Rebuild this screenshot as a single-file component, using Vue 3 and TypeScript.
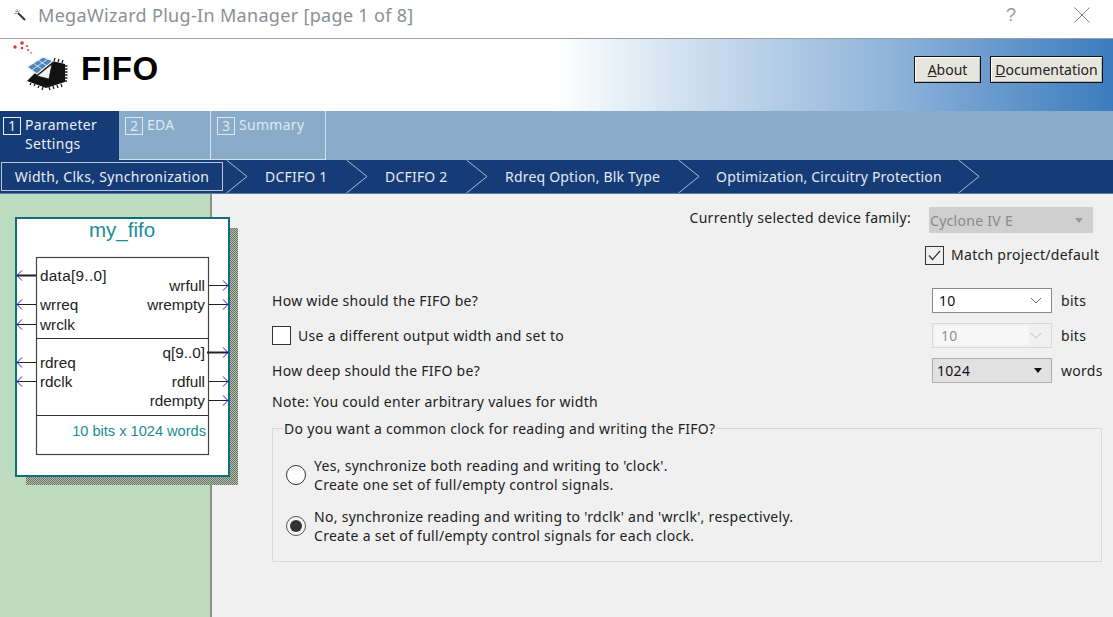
<script setup lang="ts">
interface Step { label: string; active?: boolean }
const steps: Step[] = [
  { label: 'Width, Clks, Synchronization', active: true },
  { label: 'DCFIFO 1' },
  { label: 'DCFIFO 2' },
  { label: 'Rdreq Option, Blk Type' },
  { label: 'Optimization, Circuitry Protection' },
]
const tabs = [
  { n: 1, lines: ['Parameter', 'Settings'], active: true, w: 119 },
  { n: 2, lines: ['EDA'], active: false, w: 92 },
  { n: 3, lines: ['Summary'], active: false, w: 115 },
]
const leftPins = [
  { y: 58, name: 'data[9..0]', bus: true },
  { y: 87, name: 'wrreq' },
  { y: 107, name: 'wrclk' },
  { y: 145, name: 'rdreq' },
  { y: 164, name: 'rdclk' },
]
const rightPins = [
  { y: 68, name: 'wrfull' },
  { y: 87, name: 'wrempty' },
  { y: 135, name: 'q[9..0]', bus: true },
  { y: 164, name: 'rdfull' },
  { y: 183, name: 'rdempty' },
]
</script>

<template>
  <div class="win">
    <div class="titlebar">
      <svg class="wand" width="14" height="14" viewBox="0 0 14 14">
        <path d="M5 5 L12 12" stroke="#333" stroke-width="2" />
        <path d="M2 3 L5 4 M4 1 L4.500 3.500 M7 2 L5 4 M1 6 L4 5" stroke="#999" stroke-width="1" />
      </svg>
      <span class="title">MegaWizard Plug-In Manager [page 1 of 8]</span>
      <span class="help">?</span>
      <svg class="close" width="16" height="16" viewBox="0 0 16 16">
        <path d="M0.500 0.500 L15.500 15.500 M15.500 0.500 L0.500 15.500" stroke="#808080" stroke-width="1" fill="none" />
      </svg>
    </div>

    <header class="banner">
      <svg class="logo" width="60" height="58" viewBox="0 0 60 58">
        <g fill="#d9342c">
          <circle cx="3" cy="7" r="1.700" /><circle cx="10" cy="3" r="1.800" /><circle cx="10" cy="8" r="1.300" />
          <circle cx="15" cy="6" r="1" /><circle cx="16" cy="10" r="1" /><circle cx="19" cy="13" r="0.800" />
        </g>
        <path d="M36 20 L53 24 L53 42 L34 48 L15 41 L22 34 Z" fill="#111" />
        <path d="M53 26 h2.500 M53 29 h2.500 M53 32 h2.500 M53 35 h2.500 M53 38 h2.500 M53 41 h2 M49 44 l1 3 M45 45 l1 3 M41 46 l1 3 M37 47 l1 3 M31 47 l-1 3 M27 46 l-1 2 M23 44 l-1 2 M19 43 l-1 2 M42 21 l1 -3 M46 22 l1 -3 M50 23 l1 -3" stroke="#1c1c1c" stroke-width="1.300" />
        <path d="M15 27 L31 17 L41 21 L25 34 Z" fill="#4f86b8" stroke="#eef3f8" stroke-width="1.200" />
        <path d="M20 30 L36 19 M21 23 L31 30 M26 20 L35 26" stroke="#dfe9f3" stroke-width="0.900" />
        <path d="M25 36 L40 24 L37 39 Z" fill="#f2f2f2" stroke="#111" stroke-width="0.800" />
      </svg>
      <span class="fifo">FIFO</span>
      <div class="banner-btns">
        <button class="btn about"><u>A</u>bout</button>
        <button class="btn doc"><u>D</u>ocumentation</button>
      </div>
    </header>

    <nav class="tabs">
      <div v-for="t in tabs" :key="t.n" class="tab" :class="{ on: t.active }" :style="{ width: t.w + 'px' }">
        <span class="num">{{ t.n }}</span>
        <span class="tab-label"><span v-for="l in t.lines" :key="l" class="tab-line">{{ l }}</span></span>
      </div>
    </nav>

    <nav class="steps">
      <template v-for="(s, i) in steps" :key="s.label">
        <span class="step" :class="[{ on: s.active }, 's' + i]">{{ s.label }}</span>
        <svg class="chev" width="22" height="33" viewBox="0 0 22 33">
          <path d="M0.500 0 L21 16.500 L0.500 33" stroke="#aab9cf" stroke-width="1" fill="none" />
        </svg>
      </template>
    </nav>

    <main class="body">
      <aside class="side">
        <svg class="symbol" width="226" height="270" viewBox="0 0 226 270">
          <defs>
            <pattern id="dots" width="2" height="2" patternUnits="userSpaceOnUse">
              <rect width="2" height="2" fill="#b4bdb0" />
              <rect width="1" height="1" fill="#66755f" />
              <rect x="1" y="1" width="1" height="1" fill="#66755f" />
            </pattern>
          </defs>
          <rect x="11" y="11" width="212" height="257" fill="url(#dots)" />
          <rect x="1" y="1" width="213" height="258" fill="#fff" stroke="#0d7078" stroke-width="2" />
          <text x="107" y="20" class="t-name" text-anchor="middle">my_fifo</text>
          <rect x="21.500" y="40.500" width="172" height="197" fill="#fff" stroke="#444" stroke-width="1.200" />
          <path d="M21 121.500 H194 M21 198.500 H194" stroke="#333" stroke-width="1.200" />
          <g v-for="p in leftPins" :key="p.name">
            <path :d="`M2 ${p.y + 0.5} H21`" stroke="#222" :stroke-width="p.bus ? 2 : 1" />
            <path :d="`M7 ${p.y - 4.5} L2 ${p.y + 0.5} L7 ${p.y + 5.5}`" stroke="#1a1aff" stroke-width="1" fill="none" />
            <text x="25" :y="p.y + 6" class="t-pin" :class="{ wide: p.bus }">{{ p.name }}</text>
          </g>
          <g v-for="p in rightPins" :key="p.name">
            <path :d="`M${p.bus ? 192 : 194} ${p.y + 0.5} H213`" stroke="#222" :stroke-width="p.bus ? 2 : 1" />
            <path :d="`M208 ${p.y - 4.5} L213 ${p.y + 0.5} L208 ${p.y + 5.5}`" stroke="#1a1aff" stroke-width="1" fill="none" />
            <text x="190" :y="p.y + 5.5" class="t-pin" text-anchor="end">{{ p.name }}</text>
          </g>
          <text x="191" y="219" class="t-info" text-anchor="end">10 bits x 1024 words</text>
        </svg>
      </aside>

      <section class="panel">
        <div class="family">
          <span class="lift3">Currently selected device family:</span>
          <div class="fam-select">
            <span>Cyclone IV E</span>
            <i class="tri light"></i>
          </div>
        </div>
        <label class="match">
          <span class="check">
            <svg width="13" height="11" viewBox="0 0 13 11"><path d="M1 5.500 L4.500 9.500 L12 1" stroke="#333" stroke-width="1.200" fill="none" /></svg>
          </span>
          <span class="lift1">Match project/default</span>
        </label>

        <div class="row r-wide">
          <span class="row-label">How wide should the FIFO be?</span>
          <div class="combo"><span>10</span><svg width="12" height="7" viewBox="0 0 12 7"><path d="M1 1 L6 6 L11 1" stroke="#666" fill="none" /></svg></div>
          <span class="unit">bits</span>
        </div>
        <div class="row r-diff">
          <span class="row-label with-check"><span class="check"></span>Use a different output width and set to</span>
          <div class="combo off"><span class="off-field">10</span><svg width="12" height="7" viewBox="0 0 12 7"><path d="M1 1 L6 6 L11 1" stroke="#bbb" fill="none" /></svg></div>
          <span class="unit">bits</span>
        </div>
        <div class="row r-deep">
          <span class="row-label">How deep should the FIFO be?</span>
          <div class="combo drop"><span>1024</span><i class="tri"></i></div>
          <span class="unit">words</span>
        </div>
        <p class="note">Note: You could enter arbitrary values for width</p>

        <fieldset class="group">
          <legend>Do you want a common clock for reading and writing the FIFO?</legend>
          <div class="radio first">
            <span class="dot"></span>
            <span>Yes, synchronize both reading and writing to 'clock'.<br>Create one set of full/empty control signals.</span>
          </div>
          <div class="radio">
            <span class="dot sel"></span>
            <span>No, synchronize reading and writing to 'rdclk' and 'wrclk', respectively.<br>Create a set of full/empty control signals for each clock.</span>
          </div>
        </fieldset>
      </section>
    </main>
  </div>
</template>

<style>
html, body { margin: 0; padding: 0; background: #f0f0f0; }
</style>

<style scoped>
.win {
  width: 1113px; height: 617px; overflow: hidden; display: flex; flex-direction: column;
  font-family: "Noto Sans", "Open Sans", sans-serif; font-size: 14px; letter-spacing: 0.29px; color: #222; background: #f0f0f0;
}
.titlebar {
  flex: none; background: #fff; border-bottom: 1px solid #9a9fa6;
  display: flex; align-items: center; padding: 0 0 8px 13px; box-sizing: border-box; height: 39px;
}
.wand { flex: none; }
.title { margin-left: 11px; font-size: 18px; color: #8b8f94; letter-spacing: 0.32px; }
.help { margin-left: auto; font-size: 18px; color: #9a9a9a; font-family: "Liberation Sans", sans-serif; letter-spacing: 0; }
.close { margin: 0 23px 0 58px; }
.banner {
  height: 72px; flex: none; display: flex; align-items: center; padding-bottom: 12px; box-sizing: border-box;
  background: linear-gradient(90deg, #fff 0, #fff 50%, #d6e4f1 60%, #8fb4da 80%, #3c7cbd 100%);
}
.logo { margin: 0 0 0 12px; flex: none; }
.fifo { font-family: "Liberation Sans", sans-serif; font-weight: 700; font-size: 33px; color: #000; margin-left: 9px; letter-spacing: 0.7px; }
.banner-btns { margin-left: auto; margin-right: 10px; display: flex; gap: 9px; }
.btn {
  height: 27px; padding: 0; border: 1px solid #111; background: #e6e6de; font: inherit; font-size: 14px; letter-spacing: 0;
  color: #222; box-shadow: inset 1px 1px 0 #fff, inset -1px -1px 0 #bbb;
}
.about { width: 67px; }
.doc { width: 113px; }
.tabs { height: 49px; flex: none; display: flex; background: #8aaccb; }
.tab {
  box-sizing: border-box; border-right: 1px solid #d6e2ee; border-bottom: 1px solid #d6e2ee; padding: 4px 0 0 6px;
  display: flex; gap: 4px; color: #dfe8f1; line-height: 19px; font-size: 14px;
}
.tab.on { background: #163c78; color: #e8eef5; border: none; padding: 4px 0 0 3px; }
.num {
  width: 16px; height: 16px; margin-top: 2px; border: 1px solid currentColor; flex: none; text-align: center; line-height: 16px; font-size: 13.500px; box-sizing: content-box; letter-spacing: 0;
}
.tab-line { display: block; }
.steps { height: 33px; flex: none; display: flex; align-items: center; background: #163c78; color: #e3e9f1; font-size: 14px; letter-spacing: 0.2px; border-bottom: 1px solid #5f7fa8; box-sizing: content-box; }
.step { white-space: nowrap; }
.step.on {
  box-sizing: border-box; width: 222px; height: 29px; margin-left: 1px; border: 1px solid #b9c7da; display: flex; align-items: center; justify-content: center;
  color: #e8eef5; letter-spacing: 0.32px;
}
.chev { flex: none; }
.s0 + .chev { margin-left: 3px; }
.s1 { margin-left: 17px; width: 81px; }
.s2 { margin-left: 17px; width: 81px; }
.s3 { margin-left: 17px; width: 173px; }
.s4 { margin-left: 16px; width: 242px; }
.body { flex: 1; display: flex; min-height: 0; }
.side { width: 210px; flex: none; background: #bddbbf; border-right: 2px solid #8e8e8e; box-sizing: content-box; position: relative; z-index: 1; }
.symbol { display: block; margin: 23px 0 0 15px; overflow: visible; }
.t-name { font: 20.500px "Liberation Sans", sans-serif; fill: #1a8c96; letter-spacing: 0; }
.t-pin { font: 15.300px "Liberation Sans", sans-serif; fill: #222; letter-spacing: 0; }
.t-pin.wide { letter-spacing: 0.3px; }
.t-info { font: 14.600px "Liberation Sans", sans-serif; fill: #1a8c96; letter-spacing: 0; }
.panel { flex: 1; min-width: 0; padding: 13px 11px 0 60px; box-sizing: border-box; position: relative; }
.family { display: flex; justify-content: flex-end; align-items: center; margin-right: 9px; gap: 18px; height: 26px; }
.lift3 { margin-bottom: 6px; }
.lift1 { margin-bottom: 2px; }
.fam-select {
  width: 164px; height: 26px; background: #cfcfcf; color: #8a8a8a; display: flex; align-items: center; justify-content: space-between;
  padding: 0 10px 0 1px; box-sizing: border-box; font-size: 14px;
}
.tri { width: 0; height: 0; border: 4px solid transparent; border-top: 5px solid #111; border-bottom: 0; display: block; }
.tri.light { border-top-color: #999; }
.match { display: flex; align-items: center; gap: 7px; height: 20px; margin: 12px 0 0 653px; white-space: nowrap; }
.check {
  width: 19px; height: 19px; flex: none; box-sizing: border-box; border: 1px solid #333; background: #fff;
  display: inline-flex; align-items: center; justify-content: center;
}
.match .check { background: #f0f0f0; }
.row { display: flex; align-items: center; height: 25px; }
.row-label { width: 660px; flex: none; }
.with-check { display: flex; align-items: center; gap: 7px; }
.r-wide { margin-top: 23px; }
.r-diff { margin-top: 10px; }
.r-deep { margin-top: 10px; }
.combo {
  width: 120px; height: 25px; box-sizing: border-box; border: 1px solid #8a8a8a; background: #fff; display: flex; align-items: center;
  justify-content: space-between; padding: 0 9px 0 6px; flex: none; color: #111;
}
.combo.off { border-color: #d9d9d9; color: #8f8f8f; background: #f0f0f0; padding: 0 9px 0 0; }
.off-field { background: #f7f7f7; width: 94px; height: 19px; line-height: 19px; padding-left: 6px; box-sizing: border-box; margin-left: 2px; }
.combo.drop { background: #e1e1e1; border-color: #adadad; padding: 0 9px 0 4px; }
.unit { margin-left: 9px; }
.note { margin: 9px 0 0; height: 20px; line-height: 20px; }
.group {
  margin: 7px 0 0; padding: 0; border: 1px solid #d9d9d9; height: 143px; box-sizing: border-box; min-width: 0;
}
.group legend { padding: 0 1px; margin-left: 10px; line-height: 19px; height: 19px; }
.radio { display: flex; align-items: center; padding-left: 13px; gap: 8px; line-height: 19px; margin-top: 13px; }
.radio.first { margin-top: 18px; }
.dot {
  width: 20px; height: 20px; box-sizing: border-box; border-radius: 50%; border: 1.500px solid #333; background: #fff; flex: none; position: relative;
}
.dot.sel { background: #f4f4f4; border-color: #555; }
.dot.sel::after { content: ""; position: absolute; inset: 3px; border-radius: 50%; background: #333; }
</style>
